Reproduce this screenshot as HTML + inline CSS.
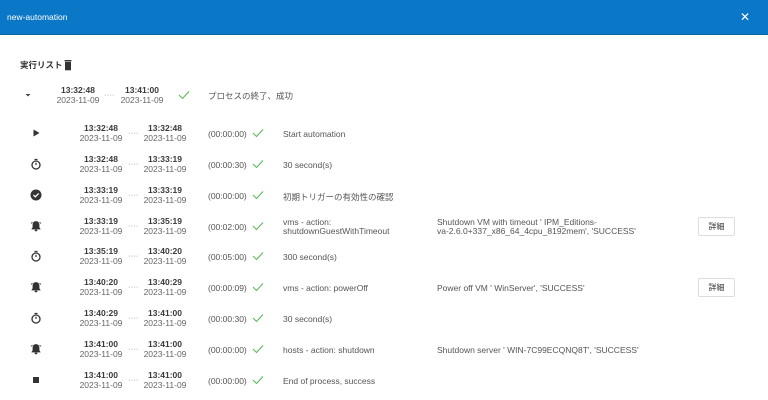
<!DOCTYPE html>
<html><head><meta charset="utf-8"><style>
*{margin:0;padding:0;box-sizing:border-box}
body{width:768px;height:400px;background:#fff;position:relative;overflow:hidden;font-family:"Liberation Sans","Noto Sans CJK JP",sans-serif;color:#555;font-size:8.5px}
.hd{position:absolute;left:0;top:0;width:768px;height:35px;background:#0a78c6;border-bottom:1px solid #0864a8}
.hd .t{position:absolute;left:7px;top:12px;color:#fff;font-size:8.5px}
.hd .x{position:absolute;left:740px;top:11px;color:#fff;font-size:12px;line-height:12px}
.a{position:absolute;white-space:nowrap}
.tm{position:absolute;text-align:center;width:60px;line-height:10px}
.tm b{display:block;color:#3a3a3a;font-size:8.5px}
.tm span{display:block;color:#666;font-size:8.5px}
.dots{position:absolute;color:#777;font-size:7px;letter-spacing:0.3px}
.ck{position:absolute;width:12px;height:10px}
.ic{position:absolute;width:12px;height:12px}
.btn{position:absolute;left:698px;width:37px;height:19px;border:1px solid #ddd;border-radius:2px;background:#fff;font-size:8px;text-align:center;line-height:17px;color:#333}
.d{position:absolute;line-height:9px;color:#555}
</style></head><body>
<div class="hd"><div class="t">new-automation</div><div class="x">✕</div></div>
<div class="a" style="left:20px;top:59px;font-weight:bold;color:#333;font-size:8.5px">実行リスト</div>
<svg class="ic" style="left:62px;top:59px" viewBox="0 0 12 12"><rect x="2.5" y="1" width="7" height="1.3" fill="#333"/><rect x="3" y="2.8" width="6" height="8.5" fill="#333"/></svg>

<svg class="ic" style="left:22px;top:89px" viewBox="0 0 12 12"><path d="M3.5 5h5l-2.5 2.5z" fill="#444"/></svg>
<div class="tm" style="left:48px;top:85px"><b>13:32:48</b><span>2023-11-09</span></div>
<div class="dots" style="left:104px;top:92px">····</div>
<div class="tm" style="left:112px;top:85px"><b>13:41:00</b><span>2023-11-09</span></div>
<svg class="ck" style="left:178px;top:90px" viewBox="0 0 12 10"><path d="M1 5l3.5 3.5L11 1.5" stroke="#5cb85c" stroke-width="1.1" fill="none"/></svg>
<div class="a" style="left:208px;top:90px;color:#555">プロセスの終了、成功</div>

<svg class="ic" style="left:30px;top:127px" viewBox="0 0 12 12"><path d="M3.5 2.5v7l6-3.5z" fill="#333"/></svg>
<div class="tm" style="left:71px;top:123px"><b>13:32:48</b><span>2023-11-09</span></div>
<div class="dots" style="left:128px;top:130px">····</div>
<div class="tm" style="left:135px;top:123px"><b>13:32:48</b><span>2023-11-09</span></div>
<div class="a" style="left:208px;top:129px">(00:00:00)</div>
<svg class="ck" style="left:252px;top:128px" viewBox="0 0 12 10"><path d="M1 5l3.5 3.5L11 1.5" stroke="#5cb85c" stroke-width="1.1" fill="none"/></svg>
<div class="a" style="left:283px;top:129px">Start automation</div>

<svg class="ic" style="left:30px;top:158px" viewBox="0 0 12 12"><circle cx="6" cy="7" r="4" stroke="#333" stroke-width="1.3" fill="none"/><path d="M4.5 1.5h3M6 7V4.8" stroke="#333" stroke-width="1.2"/></svg>
<div class="tm" style="left:71px;top:154px"><b>13:32:48</b><span>2023-11-09</span></div>
<div class="dots" style="left:128px;top:161px">····</div>
<div class="tm" style="left:135px;top:154px"><b>13:33:19</b><span>2023-11-09</span></div>
<div class="a" style="left:208px;top:160px">(00:00:30)</div>
<svg class="ck" style="left:252px;top:159px" viewBox="0 0 12 10"><path d="M1 5l3.5 3.5L11 1.5" stroke="#5cb85c" stroke-width="1.1" fill="none"/></svg>
<div class="a" style="left:283px;top:160px">30 second(s)</div>

<svg class="ic" style="left:30px;top:189px" viewBox="0 0 12 12"><circle cx="6" cy="6" r="5.5" fill="#333"/><path d="M3.5 6l1.8 1.8L8.7 4.4" stroke="#fff" stroke-width="1.3" fill="none"/></svg>
<div class="tm" style="left:71px;top:185px"><b>13:33:19</b><span>2023-11-09</span></div>
<div class="dots" style="left:128px;top:192px">····</div>
<div class="tm" style="left:135px;top:185px"><b>13:33:19</b><span>2023-11-09</span></div>
<div class="a" style="left:208px;top:191px">(00:00:00)</div>
<svg class="ck" style="left:252px;top:190px" viewBox="0 0 12 10"><path d="M1 5l3.5 3.5L11 1.5" stroke="#5cb85c" stroke-width="1.1" fill="none"/></svg>
<div class="a" style="left:283px;top:191px">初期トリガーの有効性の確認</div>

<svg class="ic" style="left:30px;top:220px" viewBox="0 0 12 12"><path d="M6 1.5c-2 0-3 1.5-3 3.5v2.5L2 9h8L9 7.5V5c0-2-1-3.5-3-3.5z M5 10h2a1 1 0 0 1-2 0z M1 3.5L2.5 2 M11 3.5L9.5 2" fill="#333" stroke="#333" stroke-width="0.8"/></svg>
<div class="tm" style="left:71px;top:216px"><b>13:33:19</b><span>2023-11-09</span></div>
<div class="dots" style="left:128px;top:223px">····</div>
<div class="tm" style="left:135px;top:216px"><b>13:35:19</b><span>2023-11-09</span></div>
<div class="a" style="left:208px;top:222px">(00:02:00)</div>
<svg class="ck" style="left:252px;top:221px" viewBox="0 0 12 10"><path d="M1 5l3.5 3.5L11 1.5" stroke="#5cb85c" stroke-width="1.1" fill="none"/></svg>
<div class="d" style="left:283px;top:218px">vms - action:<br>shutdownGuestWithTimeout</div>
<div class="d" style="left:437px;top:218px">Shutdown VM with timeout ' IPM_Editions-<br>va-2.6.0+337_x86_64_4cpu_8192mem', 'SUCCESS'</div>
<div class="btn" style="top:217px">詳細</div>

<svg class="ic" style="left:30px;top:250px" viewBox="0 0 12 12"><circle cx="6" cy="7" r="4" stroke="#333" stroke-width="1.3" fill="none"/><path d="M4.5 1.5h3M6 7V4.8" stroke="#333" stroke-width="1.2"/></svg>
<div class="tm" style="left:71px;top:246px"><b>13:35:19</b><span>2023-11-09</span></div>
<div class="dots" style="left:128px;top:253px">····</div>
<div class="tm" style="left:135px;top:246px"><b>13:40:20</b><span>2023-11-09</span></div>
<div class="a" style="left:208px;top:252px">(00:05:00)</div>
<svg class="ck" style="left:252px;top:251px" viewBox="0 0 12 10"><path d="M1 5l3.5 3.5L11 1.5" stroke="#5cb85c" stroke-width="1.1" fill="none"/></svg>
<div class="a" style="left:283px;top:252px">300 second(s)</div>

<svg class="ic" style="left:30px;top:281px" viewBox="0 0 12 12"><path d="M6 1.5c-2 0-3 1.5-3 3.5v2.5L2 9h8L9 7.5V5c0-2-1-3.5-3-3.5z M5 10h2a1 1 0 0 1-2 0z M1 3.5L2.5 2 M11 3.5L9.5 2" fill="#333" stroke="#333" stroke-width="0.8"/></svg>
<div class="tm" style="left:71px;top:277px"><b>13:40:20</b><span>2023-11-09</span></div>
<div class="dots" style="left:128px;top:284px">····</div>
<div class="tm" style="left:135px;top:277px"><b>13:40:29</b><span>2023-11-09</span></div>
<div class="a" style="left:208px;top:283px">(00:00:09)</div>
<svg class="ck" style="left:252px;top:282px" viewBox="0 0 12 10"><path d="M1 5l3.5 3.5L11 1.5" stroke="#5cb85c" stroke-width="1.1" fill="none"/></svg>
<div class="a" style="left:283px;top:283px">vms - action: powerOff</div>
<div class="a" style="left:437px;top:283px;color:#555">Power off VM ' WinServer', 'SUCCESS'</div>
<div class="btn" style="top:278px">詳細</div>

<svg class="ic" style="left:30px;top:312px" viewBox="0 0 12 12"><circle cx="6" cy="7" r="4" stroke="#333" stroke-width="1.3" fill="none"/><path d="M4.5 1.5h3M6 7V4.8" stroke="#333" stroke-width="1.2"/></svg>
<div class="tm" style="left:71px;top:308px"><b>13:40:29</b><span>2023-11-09</span></div>
<div class="dots" style="left:128px;top:315px">····</div>
<div class="tm" style="left:135px;top:308px"><b>13:41:00</b><span>2023-11-09</span></div>
<div class="a" style="left:208px;top:314px">(00:00:30)</div>
<svg class="ck" style="left:252px;top:313px" viewBox="0 0 12 10"><path d="M1 5l3.5 3.5L11 1.5" stroke="#5cb85c" stroke-width="1.1" fill="none"/></svg>
<div class="a" style="left:283px;top:314px">30 second(s)</div>

<svg class="ic" style="left:30px;top:343px" viewBox="0 0 12 12"><path d="M6 1.5c-2 0-3 1.5-3 3.5v2.5L2 9h8L9 7.5V5c0-2-1-3.5-3-3.5z M5 10h2a1 1 0 0 1-2 0z M1 3.5L2.5 2 M11 3.5L9.5 2" fill="#333" stroke="#333" stroke-width="0.8"/></svg>
<div class="tm" style="left:71px;top:339px"><b>13:41:00</b><span>2023-11-09</span></div>
<div class="dots" style="left:128px;top:346px">····</div>
<div class="tm" style="left:135px;top:339px"><b>13:41:00</b><span>2023-11-09</span></div>
<div class="a" style="left:208px;top:345px">(00:00:00)</div>
<svg class="ck" style="left:252px;top:344px" viewBox="0 0 12 10"><path d="M1 5l3.5 3.5L11 1.5" stroke="#5cb85c" stroke-width="1.1" fill="none"/></svg>
<div class="a" style="left:283px;top:345px">hosts - action: shutdown</div>
<div class="a" style="left:437px;top:345px;color:#555">Shutdown server ' WIN-7C99ECQNQ8T', 'SUCCESS'</div>

<svg class="ic" style="left:30px;top:374px" viewBox="0 0 12 12"><rect x="3" y="3" width="6" height="6" fill="#333"/></svg>
<div class="tm" style="left:71px;top:370px"><b>13:41:00</b><span>2023-11-09</span></div>
<div class="dots" style="left:128px;top:377px">····</div>
<div class="tm" style="left:135px;top:370px"><b>13:41:00</b><span>2023-11-09</span></div>
<div class="a" style="left:208px;top:376px">(00:00:00)</div>
<svg class="ck" style="left:252px;top:375px" viewBox="0 0 12 10"><path d="M1 5l3.5 3.5L11 1.5" stroke="#5cb85c" stroke-width="1.1" fill="none"/></svg>
<div class="a" style="left:283px;top:376px">End of process, success</div>
</body></html>
